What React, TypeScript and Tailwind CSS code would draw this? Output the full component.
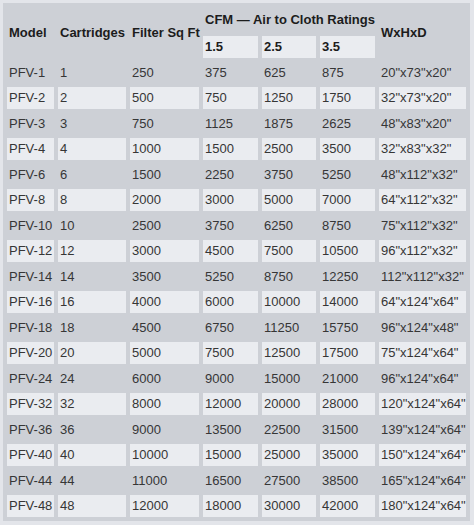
const rows: [string, number, number, number, number, number, string][] = [
  ['PFV-1', 1, 250, 375, 625, 875, '20"x73"x20"'],
  ['PFV-2', 2, 500, 750, 1250, 1750, '32"x73"x20"'],
  ['PFV-3', 3, 750, 1125, 1875, 2625, '48"x83"x20"'],
  ['PFV-4', 4, 1000, 1500, 2500, 3500, '32"x83"x32"'],
  ['PFV-6', 6, 1500, 2250, 3750, 5250, '48"x112"x32"'],
  ['PFV-8', 8, 2000, 3000, 5000, 7000, '64"x112"x32"'],
  ['PFV-10', 10, 2500, 3750, 6250, 8750, '75"x112"x32"'],
  ['PFV-12', 12, 3000, 4500, 7500, 10500, '96"x112"x32"'],
  ['PFV-14', 14, 3500, 5250, 8750, 12250, '112"x112"x32"'],
  ['PFV-16', 16, 4000, 6000, 10000, 14000, '64"x124"x64"'],
  ['PFV-18', 18, 4500, 6750, 11250, 15750, '96"x124"x48"'],
  ['PFV-20', 20, 5000, 7500, 12500, 17500, '75"x124"x64"'],
  ['PFV-24', 24, 6000, 9000, 15000, 21000, '96"x124"x64"'],
  ['PFV-32', 32, 8000, 12000, 20000, 28000, '120"x124"x64"'],
  ['PFV-36', 36, 9000, 13500, 22500, 31500, '139"x124"x64"'],
  ['PFV-40', 40, 10000, 15000, 25000, 35000, '150"x124"x64"'],
  ['PFV-44', 44, 11000, 16500, 27500, 38500, '165"x124"x64"'],
  ['PFV-48', 48, 12000, 18000, 30000, 42000, '180"x124"x64"'],
];

const th = 'text-left align-middle font-bold text-[13px] text-[#1c1c1c] pl-[2px] p-0 whitespace-nowrap';

export default function App() {
  return (
    <div
      className="w-[474px] h-[525px] bg-[#e3e5ea] pt-[3px] pl-[3px] overflow-hidden"
      style={{ fontFamily: '"Liberation Sans", Arial, sans-serif' }}
    >
      <table className="table-fixed w-[467px] bg-[#cdd0d6] border-separate border-spacing-x-[4px] border-spacing-y-[4px]">
        <colgroup>
          <col className="w-[47px]" />
          <col className="w-[68px]" />
          <col className="w-[69px]" />
          <col className="w-[55px]" />
          <col className="w-[54px]" />
          <col className="w-[55px]" />
          <col className="w-[87px]" />
        </colgroup>
        <thead>
          <tr className="h-[25px]">
            <th rowSpan={2} className={th}>Model</th>
            <th rowSpan={2} className={th}>Cartridges</th>
            <th rowSpan={2} className={th}>Filter Sq Ft</th>
            <th colSpan={3} className={th}>CFM — Air to Cloth Ratings</th>
            <th rowSpan={2} className={th}>WxHxD</th>
          </tr>
          <tr className="h-[21.5px]">
            <th className={`${th} bg-[#eaecf0]`}>1.5</th>
            <th className={`${th} bg-[#eaecf0]`}>2.5</th>
            <th className={`${th} bg-[#eaecf0]`}>3.5</th>
          </tr>
        </thead>
        <tbody>
          {rows.map((r, i) => (
            <tr key={r[0]} className="h-[21.5px]">
              {r.map((v, j) => (
                <td
                  key={j}
                  className={`p-0 pl-[2px] align-middle text-[13px] leading-none text-[#363636] whitespace-nowrap ${
                    i % 2 === 1 ? 'bg-[#eaecf0]' : ''
                  }`}
                >
                  {v}
                </td>
              ))}
            </tr>
          ))}
        </tbody>
      </table>
    </div>
  );
}
